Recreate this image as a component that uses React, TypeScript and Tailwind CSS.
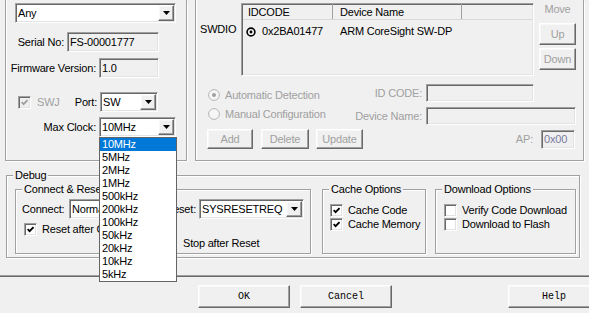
import React from "react";

const SUNKEN =
  "border border-t-[#a0a0a0] border-l-[#a0a0a0] border-r-white border-b-white shadow-[inset_1px_1px_0_#696969,inset_-1px_-1px_0_#e3e3e3]";
const RAISED =
  "border border-t-white border-l-white border-r-[#696969] border-b-[#696969] shadow-[inset_-1px_-1px_0_#a0a0a0,inset_1px_1px_0_#f8f8f8]";
const TOPGROUP =
  "border border-t-0 border-[#a0a0a0] shadow-[inset_1px_0_0_#fff,1px_1px_0_#fff]";

function Arrow({ gray }: { gray?: boolean }) {
  return (
    <svg width="7" height="4" viewBox="0 0 7 4">
      <path d="M0 0H7L3.5 4Z" fill={gray ? "#a0a0a0" : "#000"} />
    </svg>
  );
}

function Combo({ text, className = "" }: { text: string; className?: string }) {
  return (
    <div className={`flex shrink-0 bg-white p-[1px] ${SUNKEN} ${className}`}>
      <div className="flex flex-1 items-center overflow-hidden whitespace-nowrap pl-[1px]">{text}</div>
      <div className={`flex w-[16px] items-center justify-center bg-[#f0f0f0] ${RAISED}`}>
        <Arrow />
      </div>
    </div>
  );
}

function Field({ text = "", className = "" }: { text?: string; className?: string }) {
  return (
    <div className={`flex shrink-0 items-center whitespace-nowrap bg-[#f0f0f0] pl-[2px] ${SUNKEN} ${className}`}>
      {text}
    </div>
  );
}

function Btn({
  children,
  className = "",
  disabled,
}: {
  children: React.ReactNode;
  className?: string;
  disabled?: boolean;
}) {
  return (
    <div
      className={`flex shrink-0 items-center justify-center bg-[#f0f0f0] ${RAISED} ${
        disabled ? "text-[#a0a0a0]" : "text-black"
      } ${className}`}
    >
      {children}
    </div>
  );
}

function Check({
  checked,
  disabled,
  className = "",
}: {
  checked?: boolean;
  disabled?: boolean;
  className?: string;
}) {
  return (
    <div
      className={`flex h-[13px] w-[13px] shrink-0 items-center justify-center ${
        disabled ? "bg-[#f0f0f0]" : "bg-white"
      } ${SUNKEN} ${className}`}
    >
      {checked && (
        <svg width="7" height="7" viewBox="0 0 7 7">
          <path
            d="M0.6 3.1L2.6 5.2L6.5 1.1"
            fill="none"
            stroke={disabled ? "#a0a0a0" : "#000"}
            strokeWidth="1.8"
          />
        </svg>
      )}
    </div>
  );
}

function Radio({ checked }: { checked?: boolean }) {
  return (
    <svg width="12" height="12" viewBox="0 0 12 12" className="shrink-0">
      <circle cx="6" cy="6" r="5.4" fill="#f6f6f6" stroke="#b4b4b4" />
      {checked && <circle cx="6" cy="6" r="2" fill="#a0a0a0" />}
    </svg>
  );
}

function Group({
  label,
  className = "",
  children,
}: {
  label: string;
  className?: string;
  children?: React.ReactNode;
}) {
  return (
    <div className={`shrink-0 border border-[#a0a0a0] shadow-[inset_1px_1px_0_#fff,1px_1px_0_#fff] ${className}`}>
      <div className="-mb-[6px] -mt-[7px] ml-[6px] h-[13px] w-fit whitespace-nowrap bg-[#f0f0f0] px-[2px] leading-[13px]">
        {label}
      </div>
      {children}
    </div>
  );
}

const CLOCKS = ["10MHz", "5MHz", "2MHz", "1MHz", "500kHz", "200kHz", "100kHz", "50kHz", "20kHz", "10kHz", "5kHz"];

export default function App() {
  return (
    <div className="relative h-[313px] w-[589px] overflow-hidden bg-[#f0f0f0] font-['Liberation_Sans',Arial,sans-serif] text-[11px] leading-[13px] tracking-[-0.2px] text-black">
      {/* tab page */}
      <div className="h-[276px] border-b border-[#a0a0a0] shadow-[0_1px_0_#696969]">
        <div className="flex h-[161px]">
          {/* left group */}
          <div className={`ml-[5px] h-[161px] w-[182px] shrink-0 ${TOPGROUP}`}>
            <Combo text="Any" className="ml-[9px] mt-[3px] h-[20px] w-[161px]" />
            <div className="mt-[9px] flex h-[20px] items-center">
              <div className="w-[58px] shrink-0 text-right">Serial No:</div>
              <Field text="FS-00001777" className="ml-[3px] h-[20px] w-[92px]" />
            </div>
            <div className="mt-[6px] flex h-[20px] items-center">
              <div className="w-[90px] shrink-0 whitespace-nowrap text-right">Firmware Version:</div>
              <Field text="1.0" className="ml-[3px] h-[20px] w-[60px]" />
            </div>
            <div className="mt-[14px] flex h-[20px] items-center">
              <Check checked disabled className="ml-[12px]" />
              <span className="ml-[6px] w-[30px] shrink-0 text-[#a0a0a0]">SWJ</span>
              <div className="w-[30px] shrink-0 text-right">Port:</div>
              <Combo text="SW" className="ml-[3px] h-[20px] w-[58px]" />
            </div>
            <div className="mt-[5px] flex h-[20px] items-center">
              <div className="w-[90px] shrink-0 text-right">Max Clock:</div>
              <div className="relative ml-[3px] h-[20px] w-[77px] shrink-0">
                <Combo text="10MHz" className="h-[20px] w-[77px]" />
                <div className="absolute left-0 top-[20px] z-10 h-[145px] w-[78px] border border-[#646464] bg-white">
                  {CLOCKS.map((c, i) => (
                    <div
                      key={c}
                      className={`flex h-[13px] items-center pl-[2px] ${
                        i === 0 ? "bg-[#0078d7] text-white" : "text-black"
                      }`}
                    >
                      {c}
                    </div>
                  ))}
                </div>
              </div>
            </div>
          </div>

          {/* right group */}
          <div className={`ml-[8px] h-[161px] w-[389px] shrink-0 ${TOPGROUP}`}>
            <div className="mt-[3px] flex">
              <div className="w-[45px] shrink-0 pl-[4px] pt-[20px]">SWDIO</div>
              <div className={`h-[73px] w-[293px] shrink-0 bg-[#f0f0f0] px-[1px] ${SUNKEN}`}>
                <div className="flex h-[16px] border-b border-[#d8d8d8]">
                  <div className="flex w-[90px] items-center border-r border-[#a0a0a0] pl-[5px] pt-[2px]">IDCODE</div>
                  <div className="flex w-[129px] items-center border-r border-[#a0a0a0] pl-[7px] pt-[2px]">
                    Device Name
                  </div>
                  <div className="flex-1" />
                </div>
                <div className="mt-[5px] flex h-[13px] items-center whitespace-nowrap">
                  <div className="flex w-[90px] items-center pl-[3px]">
                    <svg width="10" height="10" viewBox="0 0 10 10" className="shrink-0">
                      <circle cx="5" cy="5" r="3.9" fill="none" stroke="#000" strokeWidth="1.6" />
                      <circle cx="5" cy="5" r="1.4" fill="#000" />
                    </svg>
                    <span className="ml-[6px]">0x2BA01477</span>
                  </div>
                  <div className="pl-[7px]">ARM CoreSight SW-DP</div>
                </div>
              </div>
              <div className="ml-[5px] flex w-[37px] shrink-0 flex-col items-center">
                <div className="text-[#a0a0a0]">Move</div>
                <Btn disabled className="mt-[7px] h-[22px] w-[37px]">
                  Up
                </Btn>
                <Btn disabled className="mt-[3px] h-[22px] w-[37px]">
                  Down
                </Btn>
              </div>
            </div>

            <div className="mt-[8px] flex h-[18px] items-center">
              <div className="mt-[4px] flex w-[156px] shrink-0 items-center whitespace-nowrap pl-[12px] text-[#a0a0a0]">
                <Radio checked />
                <span className="ml-[5px]">Automatic Detection</span>
              </div>
              <div className="w-[70px] shrink-0 text-right text-[#a0a0a0]">ID CODE:</div>
              <Field className="ml-[4px] h-[18px] w-[108px]" />
            </div>
            <div className="mt-[5px] flex h-[18px] items-center">
              <div className="mb-[4px] flex w-[156px] shrink-0 items-center whitespace-nowrap pl-[12px] text-[#a0a0a0]">
                <Radio />
                <span className="ml-[5px]">Manual Configuration</span>
              </div>
              <div className="w-[70px] shrink-0 whitespace-nowrap text-right text-[#a0a0a0]">Device Name:</div>
              <Field className="ml-[4px] h-[18px] w-[150px]" />
            </div>
            <div className="mt-[4px] flex h-[20px] items-center">
              <Btn disabled className="ml-[11px] h-[20px] w-[46px]">
                Add
              </Btn>
              <Btn disabled className="ml-[8px] h-[20px] w-[48px]">
                Delete
              </Btn>
              <Btn disabled className="ml-[7px] h-[20px] w-[47px]">
                Update
              </Btn>
              <div className="ml-auto text-[#a0a0a0]">AP:</div>
              <Field text="0x00" className="ml-[8px] mr-[8px] h-[19px] w-[34px] text-[#7a7aa0]" />
            </div>
          </div>
        </div>

        {/* Debug */}
        <Group label="Debug" className="ml-[6px] mt-[14px] h-[83px] w-[574px]">
          <div className="flex items-start">
            <Group label="Connect & Reset" className="ml-[8px] mt-[13px] h-[65px] w-[296px]">
              <div className="mt-[9px] flex h-[20px] items-center">
                <div className="ml-[6px] w-[44px] shrink-0">Connect:</div>
                <Combo text="Normal" className="ml-[3px] h-[20px] w-[92px]" />
                <div className="w-[35px] shrink-0 text-right">Reset:</div>
                <Combo text="SYSRESETREQ" className="ml-[3px] h-[20px] w-[105px]" />
              </div>
              <div className="mt-[4px] flex h-[13px] items-center whitespace-nowrap">
                <Check checked className="ml-[8px]" />
                <span className="ml-[5px]">Reset after Connect</span>
              </div>
              <div className="mt-[1px] flex h-[13px] items-center whitespace-nowrap">
                <Check className="ml-[147px]" />
                <span className="ml-[7px]">Stop after Reset</span>
              </div>
            </Group>
            <Group label="Cache Options" className="ml-[11px] mt-[13px] h-[65px] w-[104px]">
              <div className="mt-[14px] flex h-[13px] items-center whitespace-nowrap">
                <Check checked className="ml-[7px]" />
                <span className="ml-[5px]">Cache Code</span>
              </div>
              <div className="mt-[1px] flex h-[13px] items-center whitespace-nowrap">
                <Check checked className="ml-[7px]" />
                <span className="ml-[5px]">Cache Memory</span>
              </div>
            </Group>
            <Group label="Download Options" className="ml-[9px] mt-[13px] h-[65px] w-[141px]">
              <div className="mt-[14px] flex h-[13px] items-center whitespace-nowrap">
                <Check className="ml-[8px]" />
                <span className="ml-[5px]">Verify Code Download</span>
              </div>
              <div className="mt-[1px] flex h-[13px] items-center whitespace-nowrap">
                <Check className="ml-[8px]" />
                <span className="ml-[5px]">Download to Flash</span>
              </div>
            </Group>
          </div>
        </Group>
      </div>

      {/* dialog buttons */}
      <div className="mt-[9px] flex font-['Liberation_Mono',monospace] text-[10px] tracking-normal">
        <Btn className="ml-[198px] h-[23px] w-[92px]">OK</Btn>
        <Btn className="ml-[10px] h-[23px] w-[92px]">Cancel</Btn>
        <Btn className="ml-[116px] h-[23px] w-[92px]">Help</Btn>
      </div>
    </div>
  );
}
